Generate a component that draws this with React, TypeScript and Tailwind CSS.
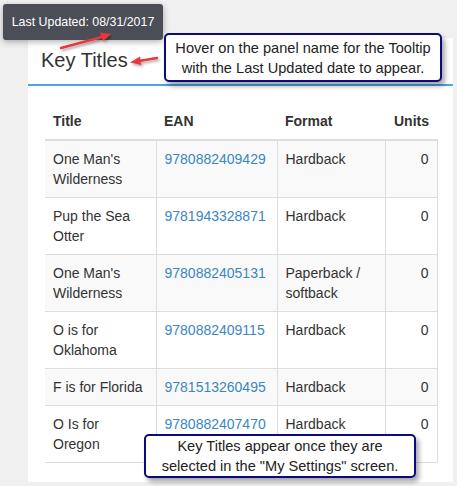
const rows = [
  { title: "One Man's Wilderness", ean: '9780882409429', format: 'Hardback', units: 0 },
  { title: 'Pup the Sea Otter', ean: '9781943328871', format: 'Hardback', units: 0 },
  { title: "One Man's Wilderness", ean: '9780882405131', format: 'Paperback / softback', units: 0 },
  { title: 'O is for Oklahoma', ean: '9780882409115', format: 'Hardback', units: 0 },
  { title: 'F is for Florida', ean: '9781513260495', format: 'Hardback', units: 0 },
  { title: 'O Is for Oregon', ean: '9780882407470', format: 'Hardback', units: 0 },
];

export default function App() {
  return (
    <div
      className="relative w-[457px] h-[486px] overflow-hidden bg-[#f0f0f0] text-[#333]"
      style={{ fontFamily: '"Liberation Sans", Arial, sans-serif' }}
    >
      {/* panel */}
      <div className="ml-[28px] mt-[38px] w-[425px] bg-white">
        <div className="h-[48px] pl-[13px] pb-[3px] flex items-center border-b-2 border-[#49a5e6]">
          <h2 className="text-[20px] leading-[22px] text-[#333]">Key Titles</h2>
        </div>
        <div className="pl-[17px] pr-[16px] pt-[17px] pb-[19px]">
          <table className="w-[392px] table-fixed border-collapse text-[14px] leading-[20px]">
            <colgroup>
              <col className="w-[111px]" />
              <col className="w-[121px]" />
              <col className="w-[108px]" />
              <col className="w-[52px]" />
            </colgroup>
            <thead>
              <tr>
                <th className="p-2 text-left font-bold border-b-2 border-[#ddd]">Title</th>
                <th className="p-2 text-left font-bold border-b-2 border-[#ddd]">EAN</th>
                <th className="p-2 text-left font-bold border-b-2 border-[#ddd]">Format</th>
                <th className="p-2 text-right font-bold border-b-2 border-[#ddd]">Units</th>
              </tr>
            </thead>
            <tbody>
              {rows.map((r, i) => (
                <tr key={i} className={i % 2 === 0 ? 'bg-[#f9f9f9]' : 'bg-white'}>
                  <td className="p-2 align-top border-b border-r border-[#ddd]">{r.title}</td>
                  <td className="p-2 align-top border-b border-r border-[#ddd] text-[#3a86c4]">{r.ean}</td>
                  <td className="p-2 align-top border-b border-r border-[#ddd]">{r.format}</td>
                  <td className="p-2 align-top border-b border-r border-[#ddd] text-right">{r.units}</td>
                </tr>
              ))}
            </tbody>
          </table>
        </div>
      </div>

      {/* tooltip */}
      <div className="absolute left-[3px] top-[4px] w-[160px] h-[36px] rounded-[3px] bg-[#4b4e56] shadow-[0_2px_6px_rgba(0,0,0,0.3)] flex items-center justify-center text-white text-[12.4px]">
        Last Updated: 08/31/2017
      </div>

      {/* callouts */}
      <div className="absolute left-[164px] top-[33px] w-[278px] h-[49px] rounded-[5px] border-2 border-[#0b0b7c] bg-white shadow-[3px_4px_5px_rgba(0,0,0,0.35)] flex items-center justify-center text-center text-[14.6px] leading-[20px] text-[#222]">
        <p>
          Hover on the panel name for the Tooltip
          <br />
          with the Last Updated date to appear.
        </p>
      </div>
      <div className="absolute left-[144px] top-[434px] w-[272px] h-[44px] rounded-[5px] border-2 border-[#0b0b7c] bg-white shadow-[3px_4px_5px_rgba(0,0,0,0.35)] flex items-center justify-center text-center text-[14.6px] leading-[20px] text-[#222]">
        <p>
          Key Titles appear once they are
          <br />
          selected in the "My Settings" screen.
        </p>
      </div>

      {/* arrows */}
      <svg className="absolute left-0 top-0 pointer-events-none" width="457" height="486">
        <defs>
          <filter id="sh" x="-20%" y="-50%" width="150%" height="250%">
            <feDropShadow dx="1.5" dy="2" stdDeviation="1.2" floodColor="#000" floodOpacity="0.3" />
          </filter>
        </defs>
        <g filter="url(#sh)" stroke="#e8383d" strokeWidth="2.5" strokeLinecap="round" fill="#e8383d">
          <line x1="61" y1="48" x2="102" y2="37" />
          <polygon points="111,34 100,32.5 103,41" stroke="none" />
          <line x1="157" y1="58" x2="139" y2="61" />
          <polygon points="130,62.5 140,56.5 141,65" stroke="none" />
        </g>
      </svg>
    </div>
  );
}
